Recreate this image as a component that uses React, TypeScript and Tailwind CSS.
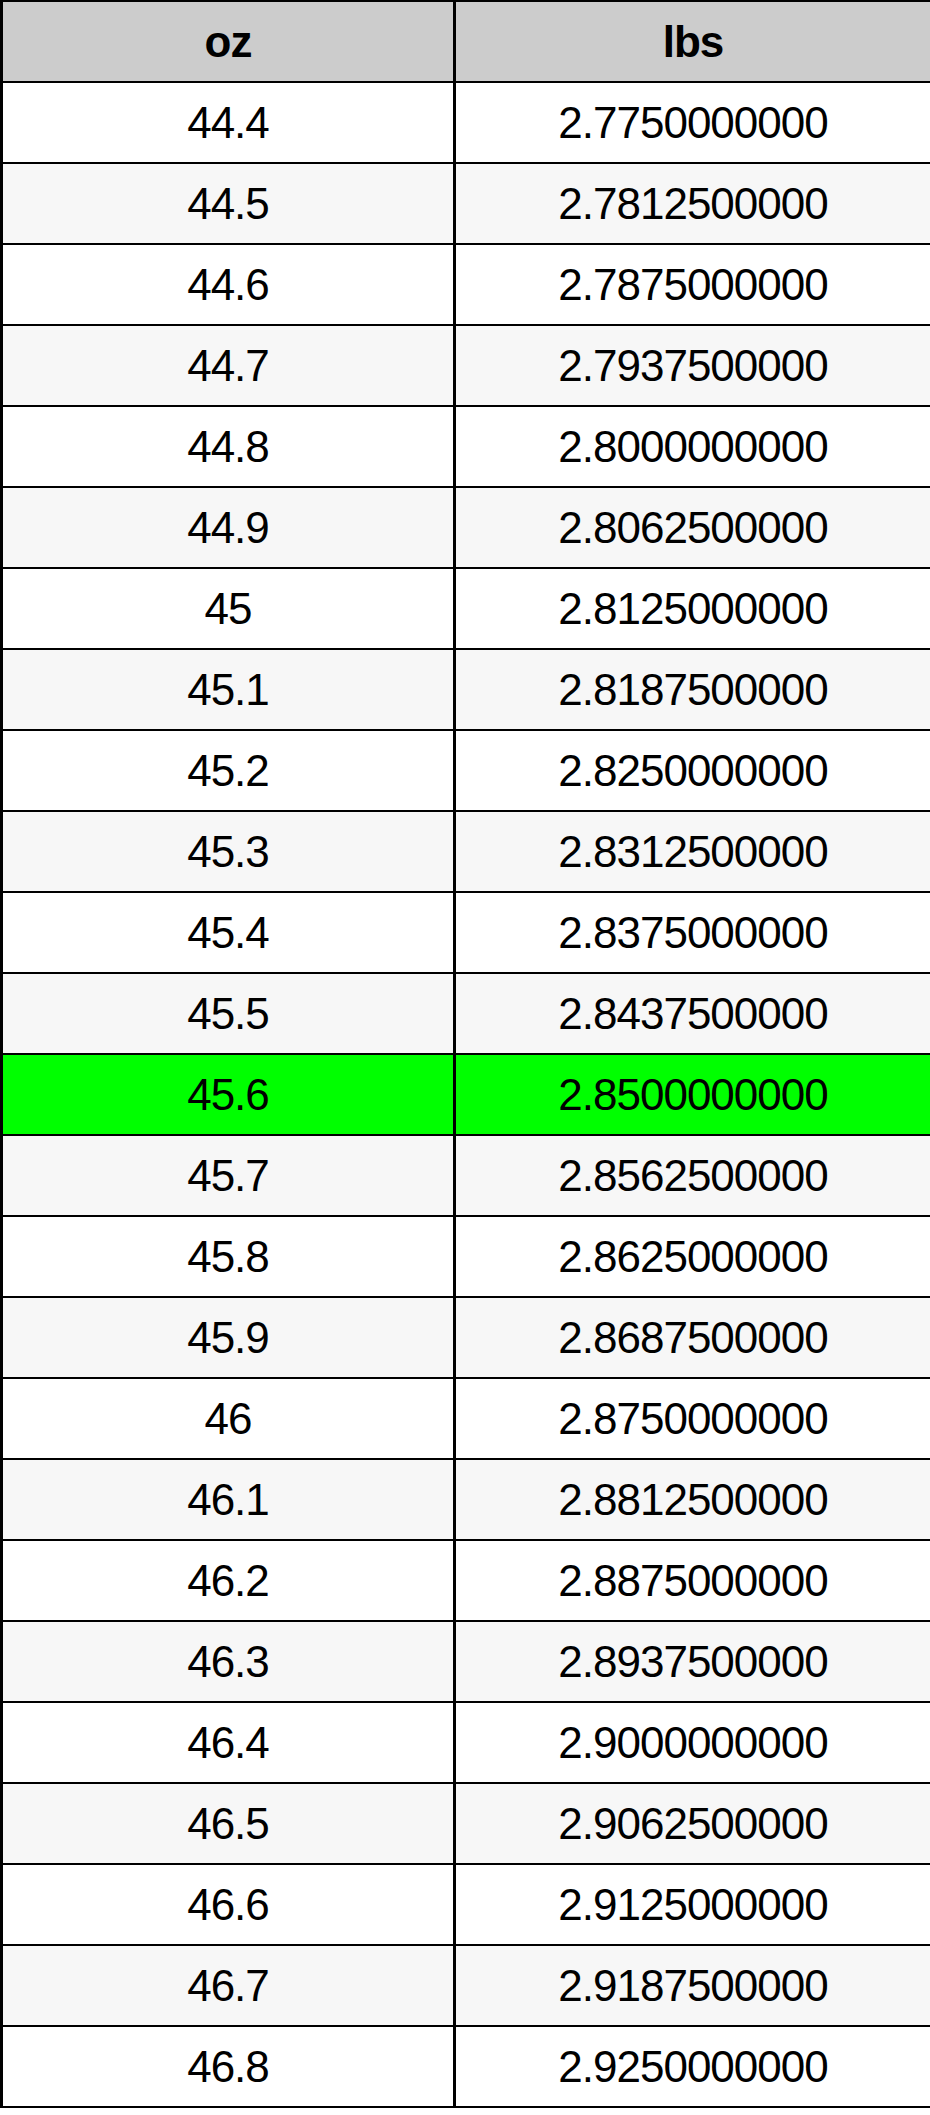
const rows: [string, string][] = [
  ["44.4", "2.7750000000"],
  ["44.5", "2.7812500000"],
  ["44.6", "2.7875000000"],
  ["44.7", "2.7937500000"],
  ["44.8", "2.8000000000"],
  ["44.9", "2.8062500000"],
  ["45", "2.8125000000"],
  ["45.1", "2.8187500000"],
  ["45.2", "2.8250000000"],
  ["45.3", "2.8312500000"],
  ["45.4", "2.8375000000"],
  ["45.5", "2.8437500000"],
  ["45.6", "2.8500000000"],
  ["45.7", "2.8562500000"],
  ["45.8", "2.8625000000"],
  ["45.9", "2.8687500000"],
  ["46", "2.8750000000"],
  ["46.1", "2.8812500000"],
  ["46.2", "2.8875000000"],
  ["46.3", "2.8937500000"],
  ["46.4", "2.9000000000"],
  ["46.5", "2.9062500000"],
  ["46.6", "2.9125000000"],
  ["46.7", "2.9187500000"],
  ["46.8", "2.9250000000"],
];

const highlight = "45.6";

export default function App() {
  return (
    <div className="w-[930px] bg-white font-['Liberation_Sans',Arial,sans-serif] text-black">
      <div className="grid grid-cols-[453px_477px] border-t-[2px] border-l-[3px] border-black">
        <div className="h-[81px] flex items-center justify-center bg-[#cccccc] border-r-[3px] border-b-[2px] border-black text-[44px] font-bold tracking-[-1px]">
          oz
        </div>
        <div className="h-[81px] flex items-center justify-center bg-[#cccccc] border-r-[3px] border-b-[2px] border-black text-[44px] font-bold tracking-[-1px]">
          lbs
        </div>
        {rows.map(([oz, lbs], i) => {
          const bg =
            oz === highlight ? "bg-[#00ff00]" : i % 2 === 1 ? "bg-[#f7f7f7]" : "bg-white";
          return [
            <div
              key={oz + "-oz"}
              className={`h-[81px] flex items-center justify-center border-r-[3px] border-b-[2px] border-black text-[44px] tracking-[-1px] ${bg}`}
            >
              {oz}
            </div>,
            <div
              key={oz + "-lbs"}
              className={`h-[81px] flex items-center justify-center border-r-[3px] border-b-[2px] border-black text-[44px] tracking-[-1px] ${bg}`}
            >
              {lbs}
            </div>,
          ];
        })}
      </div>
    </div>
  );
}
